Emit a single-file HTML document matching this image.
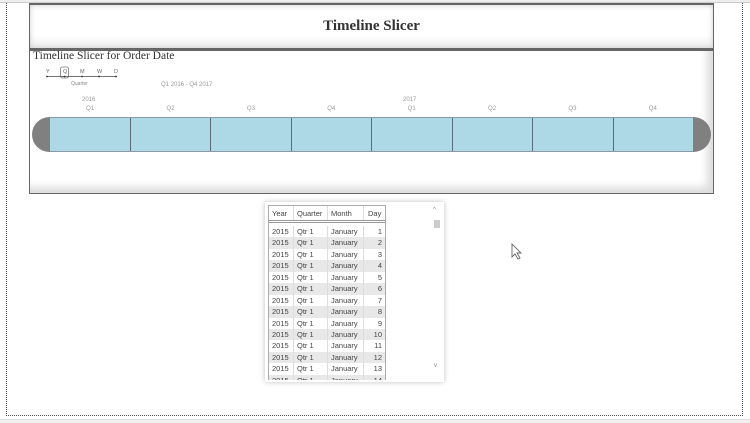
<!DOCTYPE html>
<html><head><meta charset="utf-8"><style>
*{margin:0;padding:0;box-sizing:border-box}
body{width:750px;height:423px;background:#fff;position:relative;overflow:hidden;font-family:"Liberation Sans",sans-serif}
.a{position:absolute}
.sm{font-size:6px;color:#999}
</style></head><body>
<div class="a" style="left:0;top:0;width:750px;height:3px;background:#eee;border-bottom:1px solid #ccc"></div>
<div class="a" style="left:0;top:419px;width:750px;height:4px;background:#f0f0f0;border-top:1px solid #ddd"></div>
<div class="a" style="left:6px;top:3px;width:737px;height:413px;border:1px dotted #555;border-top:none"></div>

<div class="a" style="left:29px;top:3px;width:685px;height:46px;border:1px solid #666;border-top:2px solid #666;background:linear-gradient(#fff 70%,#eee);box-shadow:inset 0 0 6px #ccc"></div>
<div class="a" style="left:29px;top:18px;width:685px;text-align:center;font-family:'Liberation Serif',serif;font-weight:bold;font-size:15px;color:#333">Timeline Slicer</div>

<div class="a" style="left:29px;top:49px;width:685px;height:145px;border:1px solid #666;border-top:2px solid #666;background:#fff;box-shadow:inset -6px -6px 8px #ddd"></div>
<div class="a" style="left:33px;top:50px;font-family:'Liberation Serif',serif;font-size:11.5px;color:#333">Timeline Slicer for Order Date</div>

<svg class="a" style="left:42px;top:66px" width="80" height="24">
<text x="4" y="7" font-size="5.5" fill="#666" font-family="Liberation Sans">Y</text>
<text x="21" y="7" font-size="5.5" fill="#666" font-family="Liberation Sans">Q</text>
<text x="38" y="7" font-size="5.5" fill="#666" font-family="Liberation Sans">M</text>
<text x="55" y="7" font-size="5.5" fill="#666" font-family="Liberation Sans">W</text>
<text x="72" y="7" font-size="5.5" fill="#666" font-family="Liberation Sans">D</text>
<rect x="18.5" y="1" width="8" height="11" rx="2" fill="none" stroke="#777" stroke-width="0.8"/>
<line x1="5" y1="10.5" x2="75" y2="10.5" stroke="#444" stroke-width="0.8"/>
<circle cx="5" cy="10.5" r="0.9" fill="#333"/><circle cx="22.5" cy="10.5" r="0.9" fill="#333"/><circle cx="40" cy="10.5" r="0.9" fill="#333"/><circle cx="57" cy="10.5" r="0.9" fill="#333"/><circle cx="74" cy="10.5" r="0.9" fill="#333"/>
<text x="29" y="19" font-size="5" fill="#888" font-family="Liberation Sans">Quarter</text>
</svg>
<div class="a sm" style="left:161px;top:82px">Q1 2016 - Q4 2017</div>
<div class="a sm" style="left:82px;top:97px">2016</div>
<div class="a sm" style="left:403px;top:97px">2017</div>

<div class="a" style="left:32px;top:117px;width:36px;height:35px;border-radius:18px 0 0 18px;background:#808080"></div>
<div class="a" style="left:675px;top:117px;width:36px;height:35px;border-radius:0 18px 18px 0;background:#808080"></div>
<div class="a" style="left:50px;top:117px;width:643px;height:35px;display:flex;background:#add8e6;border-top:1px solid #8a9aa5;border-bottom:1px solid #8a9aa5">
<div style="flex:1;border-right:1px solid #5a6a78"></div><div style="flex:1;border-right:1px solid #5a6a78"></div><div style="flex:1;border-right:1px solid #5a6a78"></div><div style="flex:1;border-right:1px solid #5a6a78"></div><div style="flex:1;border-right:1px solid #5a6a78"></div><div style="flex:1;border-right:1px solid #5a6a78"></div><div style="flex:1;border-right:1px solid #5a6a78"></div><div style="flex:1"></div>
</div>
<div class="a" style="left:50px;top:106px;width:643px;display:flex" >
<div class="sm" style="flex:1;text-align:center">Q1</div><div class="sm" style="flex:1;text-align:center">Q2</div><div class="sm" style="flex:1;text-align:center">Q3</div><div class="sm" style="flex:1;text-align:center">Q4</div><div class="sm" style="flex:1;text-align:center">Q1</div><div class="sm" style="flex:1;text-align:center">Q2</div><div class="sm" style="flex:1;text-align:center">Q3</div><div class="sm" style="flex:1;text-align:center">Q4</div>
</div>

<div class="a" style="left:265px;top:202px;width:179px;height:180px;background:#fff;box-shadow:0 0 5px rgba(0,0,0,.25)"></div>
<div class="a" style="left:268px;top:205px;width:118px;height:175px;border:1px solid #aaa;border-bottom:none;overflow:hidden;font-size:7.5px;color:#444">
<div style="display:flex;height:17px;line-height:16px;border-bottom:3px double #999">
<div style="width:25px;padding-left:3px;border-right:1px solid #ddd">Year</div><div style="width:34px;padding-left:3px;border-right:1px solid #ddd">Quarter</div><div style="width:36px;padding-left:3px;border-right:1px solid #ddd">Month</div><div style="flex:1;padding-left:4px">Day</div></div>
<div id="r" style="margin-top:3px"></div>
</div>
<div class="a" style="left:433px;top:207px;font-size:6px;color:#888">^</div>
<div class="a" style="left:434px;top:220px;width:6px;height:8px;background:#ccc"></div>
<div class="a" style="left:434px;top:363px;font-size:6px;color:#888">v</div>
<svg class="a" style="left:510px;top:243px" width="14" height="18"><path d="M2 1 L2 14 L5 11 L8 16 L10 15 L7 10 L11 10 Z" fill="#fff" stroke="#666" stroke-width="0.9"/></svg>
<script>
var h='';for(var i=1;i<=14;i++){h+='<div style="display:flex;height:11.45px;line-height:11.45px;background:'+(i%2==0?'#e8e8e8':'#fff')+'"><div style="width:25px;padding-left:3px;border-right:1px solid #ddd">2015</div><div style="width:34px;padding-left:3px;border-right:1px solid #ddd">Qtr 1</div><div style="width:36px;padding-left:3px;border-right:1px solid #ddd">January</div><div style="flex:1;text-align:right;padding-right:3px">'+i+'</div></div>'}
document.getElementById('r').innerHTML=h;
</script>
</body></html>
